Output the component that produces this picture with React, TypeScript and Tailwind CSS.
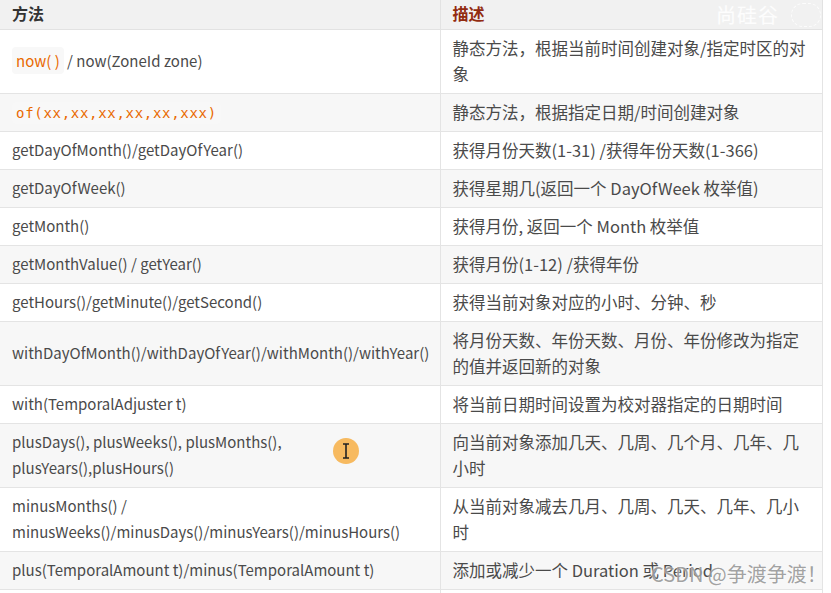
import React from 'react';

type Row = {
  method: React.ReactNode;
  desc: string;
  tall?: boolean;
};

const codeCls = 'text-[#e96900] bg-[#f8f8f8] px-1 py-[3px] rounded-sm';

const rows: Row[] = [
  {
    method: (
      <>
        <span className={codeCls}>now( )</span> / now(ZoneId zone)
      </>
    ),
    desc: '静态方法，根据当前时间创建对象/指定时区的对象',
    tall: true,
  },
  {
    method: (
      <span className={`${codeCls} font-['DejaVu_Sans_Mono',monospace] text-[14px] tracking-[0.7px]`}>
        of(xx,xx,xx,xx,xx,xxx)
      </span>
    ),
    desc: '静态方法，根据指定日期/时间创建对象',
  },
  { method: 'getDayOfMonth()/getDayOfYear()', desc: '获得月份天数(1-31) /获得年份天数(1-366)' },
  { method: 'getDayOfWeek()', desc: '获得星期几(返回一个 DayOfWeek 枚举值)' },
  { method: 'getMonth()', desc: '获得月份, 返回一个 Month 枚举值' },
  { method: 'getMonthValue() / getYear()', desc: '获得月份(1-12) /获得年份' },
  { method: 'getHours()/getMinute()/getSecond()', desc: '获得当前对象对应的小时、分钟、秒' },
  {
    method: 'withDayOfMonth()/withDayOfYear()/withMonth()/withYear()',
    desc: '将月份天数、年份天数、月份、年份修改为指定的值并返回新的对象',
    tall: true,
  },
  { method: 'with(TemporalAdjuster  t)', desc: '将当前日期时间设置为校对器指定的日期时间' },
  {
    method: (
      <>
        plusDays(), plusWeeks(), plusMonths(),
        <br />
        plusYears(),plusHours()
      </>
    ),
    desc: '向当前对象添加几天、几周、几个月、几年、几小时',
    tall: true,
  },
  {
    method: (
      <>
        minusMonths() /
        <br />
        minusWeeks()/minusDays()/minusYears()/minusHours()
      </>
    ),
    desc: '从当前对象减去几月、几周、几天、几年、几小时',
    tall: true,
  },
  { method: 'plus(TemporalAmount t)/minus(TemporalAmount t)', desc: '添加或减少一个 Duration 或 Period' },
];

function App() {
  return (
    <div className="relative w-[831px] h-[593px] overflow-hidden bg-white font-['Noto_Sans_CJK_SC','Noto_Sans',sans-serif] text-[15px] text-[#4a4a4a]">
      <table className="w-[823px] border-collapse table-fixed">
        <colgroup>
          <col className="w-[440px]" />
          <col />
        </colgroup>
        <thead>
          <tr className="bg-[#f1f1f1] h-[29px] text-[16px] font-bold">
            <th className="text-left align-middle px-3 pb-[2px] text-[#333] border-r border-b border-[#e2e2e2]">方法</th>
            <th className="text-left align-middle px-3 pb-[2px] text-[#922b10] border-r border-b border-[#e2e2e2]">描述</th>
          </tr>
        </thead>
        <tbody>
          {rows.map((r, i) => (
            <tr
              key={i}
              className={`${i % 2 === 1 ? 'bg-[#f7f7f7]' : 'bg-white'} ${r.tall ? 'h-[64px]' : 'h-[38px]'}`}
            >
              <td className="align-middle px-3 leading-[26px] border-r border-b border-[#e4e4e4]">{r.method}</td>
              <td className="align-middle px-3 text-[16.5px] leading-[26px] border-r border-b border-[#e4e4e4]">
                {r.desc}
              </td>
            </tr>
          ))}
          <tr className="bg-white h-[20px]">
            <td className="border-r border-[#e4e4e4]"></td>
            <td className="border-r border-[#e4e4e4]"></td>
          </tr>
        </tbody>
      </table>

      {/* video watermark, top right */}
      <div className="absolute left-[716px] top-0 flex items-center gap-3 text-white/85 text-[20px] whitespace-nowrap">
        <span className="tracking-[1px]">尚硅谷</span>
        <span className="w-[30px] h-[24px] rounded-full border border-dashed border-white/80"></span>
      </div>

      {/* text cursor highlight */}
      <div className="absolute left-[333px] top-[438px] w-[26px] h-[26px] rounded-full bg-[#f6b24f]/90 flex items-center justify-center">
        <svg width="10" height="16" viewBox="0 0 10 16" fill="none" stroke="#222" strokeWidth="1.6">
          <path d="M2 1h6M2 15h6M5 1v14" />
        </svg>
      </div>

      {/* watermark */}
      <div className="absolute left-[651px] top-[559px] text-[20px] text-[#8a8a8a]/80 [text-shadow:0_0_2px_#fff] whitespace-nowrap">
        CSDN @争渡争渡！
      </div>
    </div>
  );
}

export default App;
